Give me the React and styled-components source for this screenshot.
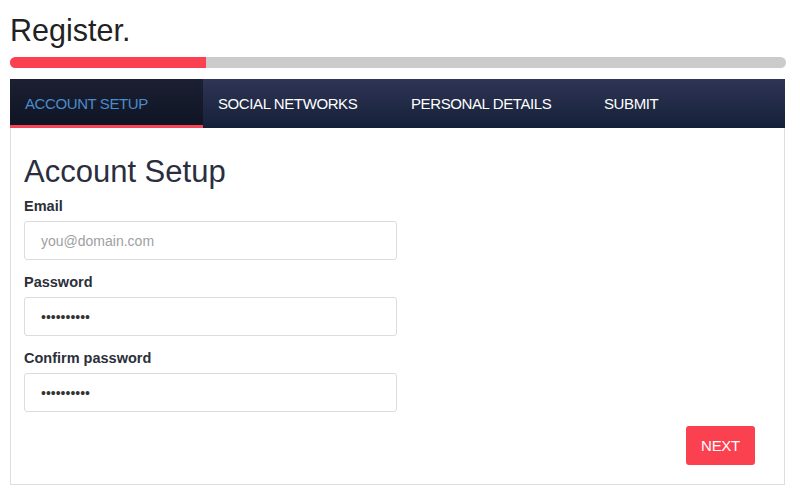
import styled, { createGlobalStyle } from 'styled-components';

const GlobalStyle = createGlobalStyle`
    body {
        margin: 0;
        background: #fff;
        font-family: "Liberation Sans", Arial, sans-serif;
    }
`;

const Page = styled.div`
    padding: 13px 14px 0 10px;
`;

const Title = styled.h1`
    margin: 0;
    font-size: 30.5px;
    line-height: 34px;
    font-weight: 400;
    color: #222;
`;

const Progress = styled.div`
    margin-top: 10px;
    height: 11px;
    border-radius: 6px;
    background: #cbcbcb;
    overflow: hidden;
    display: flex;
`;

const ProgressFill = styled.div`
    height: 100%;
    background: #fb4050;
`;

const Tabs = styled.ul`
    display: flex;
    margin: 11px 1px 0 0;
    padding: 0;
    list-style: none;
    height: 49px;
    background: linear-gradient(to bottom, #2f3554, #142039);
`;

const Tab = styled.li`
    width: 193px;
    padding-left: 15px;
    box-sizing: border-box;
    line-height: 49px;
    font-size: 15px;
    letter-spacing: -0.4px;
    color: ${props => (props.$active ? '#4a8ccc' : '#fff')};
    background: ${props => (props.$active ? 'linear-gradient(to bottom, #1c2032, #0e1424)' : 'transparent')};
    box-shadow: ${props => (props.$active ? 'inset 0 -3px 0 #f64556' : 'none')};
`;

const Panel = styled.div`
    margin-right: 1px;
    border: 1px solid #dedede;
    border-top: none;
    padding: 26px 14px 19px 13px;
`;

const Heading = styled.h2`
    margin: 0 0 6px;
    font-size: 31px;
    line-height: 36px;
    font-weight: 400;
    color: #2a2e3f;
`;

const Field = styled.div`
    margin-bottom: ${props => (props.$last ? '0' : '12px')};
`;

const Label = styled.label`
    display: block;
    margin-bottom: 5px;
    font-size: 14.5px;
    line-height: 20px;
    font-weight: 700;
    color: #2c2f3a;
`;

const Input = styled.input`
    display: block;
    width: 373px;
    height: 39px;
    box-sizing: border-box;
    padding: 0 16px;
    border: 1px solid #dcdcdc;
    border-radius: 3px;
    font-family: "Liberation Sans", Arial, sans-serif;
    font-size: 14px;
    color: #333;
    outline: none;

    &::placeholder {
        color: #a0a0a0;
    }
`;

const Actions = styled.div`
    display: flex;
    justify-content: flex-end;
    padding-right: 15px;
    margin-top: 14px;
`;

const NextButton = styled.button`
    width: 69px;
    height: 39px;
    border: none;
    border-radius: 3px;
    background: #fb4050;
    color: #fff;
    font-family: "Liberation Sans", Arial, sans-serif;
    font-size: 15px;
    letter-spacing: -0.3px;
    cursor: pointer;
`;

const tabs = ['ACCOUNT SETUP', 'SOCIAL NETWORKS', 'PERSONAL DETAILS', 'SUBMIT'];

const App = () => {
    return (
        <Page>
            <GlobalStyle />
            <Title>Register.</Title>
            <Progress>
                <ProgressFill style={{ width: '25.2%' }} />
            </Progress>
            <Tabs>
                {tabs.map((tab, index) => (
                    <Tab key={tab} $active={index === 0}>{tab}</Tab>
                ))}
            </Tabs>
            <Panel>
                <Heading>Account Setup</Heading>
                <Field>
                    <Label>Email</Label>
                    <Input type="email" placeholder="you@domain.com" />
                </Field>
                <Field>
                    <Label>Password</Label>
                    <Input type="password" defaultValue="secretpass" />
                </Field>
                <Field $last>
                    <Label>Confirm password</Label>
                    <Input type="password" defaultValue="secretpass" />
                </Field>
                <Actions>
                    <NextButton>NEXT</NextButton>
                </Actions>
            </Panel>
        </Page>
    );
};

export default App;
